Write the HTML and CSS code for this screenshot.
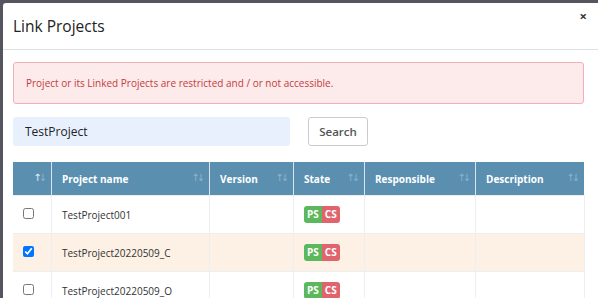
FILE: index.html
```html
<!DOCTYPE html>
<html>
<head>
    <meta charset="utf-8">
    <link rel="stylesheet" href="styles.css">
</head>
<body>
	<div class="modal">
		<div class="modal-header">
			<h5 class="modal-title">Link Projects</h5>
			<span class="close">&times;</span>
		</div>

		<div class="modal-body">
			<div class="alert">Project or its Linked Projects are restricted and / or not accessible.</div>

			<div class="search-row">
				<input class="search-input" type="text" value="TestProject">
				<button class="search-btn">Search</button>
			</div>

			<table class="projects">
				<thead>
					<tr>
						<th class="col-check"><span class="sort"><b>&#8593;</b>&#8595;</span></th>
						<th class="col-name">Project name <span class="sort">&#8593;&#8595;</span></th>
						<th class="col-version">Version <span class="sort">&#8593;&#8595;</span></th>
						<th class="col-state">State <span class="sort">&#8593;&#8595;</span></th>
						<th class="col-resp">Responsible <span class="sort">&#8593;&#8595;</span></th>
						<th class="col-desc">Description <span class="sort">&#8593;&#8595;</span></th>
					</tr>
				</thead>
				<tbody>
					<tr>
						<td class="col-check"><input type="checkbox"></td>
						<td>TestProject001</td>
						<td></td>
						<td><span class="badge ps">PS</span><span class="badge cs">CS</span></td>
						<td></td>
						<td></td>
					</tr>
					<tr class="selected">
						<td class="col-check"><input type="checkbox" checked></td>
						<td>TestProject20220509_C</td>
						<td></td>
						<td><span class="badge ps">PS</span><span class="badge cs">CS</span></td>
						<td></td>
						<td></td>
					</tr>
					<tr>
						<td class="col-check"><input type="checkbox"></td>
						<td>TestProject20220509_O</td>
						<td></td>
						<td><span class="badge ps">PS</span><span class="badge cs">CS</span></td>
						<td></td>
						<td></td>
					</tr>
				</tbody>
			</table>
		</div>
	</div>
</body>
</html>
```

FILE: styles.css
```css
body { margin:0; background-color:#55555f; font-family:"Open Sans", "Noto Sans", sans-serif; color:#212529; overflow:hidden; }

.modal { margin:3px 0 0 3px; background:#fff; height:300px; border-top-left-radius:3px; }

.modal-header { display:flex; align-items:center; justify-content:space-between; height:47px; padding:0 11px 0 10px; border-bottom:1px solid #dee2e6; box-sizing:border-box; }
.modal-title { margin:0; font-size:15.5px; font-weight:500; color:#222; }
.close { font-size:13px; font-weight:700; color:#333; align-self:flex-start; margin-top:4px; }

.modal-body { padding:12px 14px 0 10px; }

.alert { height:42px; box-sizing:border-box; display:flex; align-items:center; padding:0 12px; background:#fdeaea; border:1px solid #f1b0b7; border-radius:3px; color:#c33c3c; font-size:10px; }

.search-row { display:flex; gap:18px; margin-top:13px; }
.search-input { width:277px; height:29px; box-sizing:border-box; border:none; border-radius:3px; background:#e8f0fe; padding:0 12px; font-family:inherit; font-size:12px; color:#222; }
.search-btn { width:60px; height:29px; background:#fff; border:1px solid #ccc; border-radius:3px; font-family:inherit; font-size:11.5px; font-weight:600; color:#555; }

.projects { margin-top:16px; width:571px; border-collapse:collapse; table-layout:fixed; font-size:10px; }
.projects th { height:33px; background:#5b8fb0; color:#fff; text-align:left; font-weight:700; padding:0 10px; border-left:1px solid #d9e5ee; position:relative; }
.projects th:first-child { border-left:none; }
.projects td { height:37px; padding:0 10px; border:1px solid #eceeef; color:#333; }
.projects td:first-child { border-left:none; }
.projects tr.selected td { background:#fdf0e4; }

.sort { position:absolute; right:7px; top:10px; color:#8fb3ca; font-family:"DejaVu Sans", sans-serif; font-size:10px; font-weight:400; letter-spacing:-3px; }
.sort b { color:#e6eff5; font-weight:400; }

.col-check { width:18px; }
.col-name { width:137px; }
.col-version { width:63px; }
.col-state { width:50px; }
.col-resp { width:90px; }
.col-desc { width:88px; }

.projects input[type=checkbox] { margin:0; width:11px; height:11px; }

.badge { display:inline-block; padding:3px 3px; font-size:10px; font-weight:700; color:#fff; line-height:11px; }
.badge.ps { background:#5cb85c; border-radius:3px 0 0 3px; }
.badge.cs { background:#e0646e; border-radius:0 3px 3px 0; }
```
